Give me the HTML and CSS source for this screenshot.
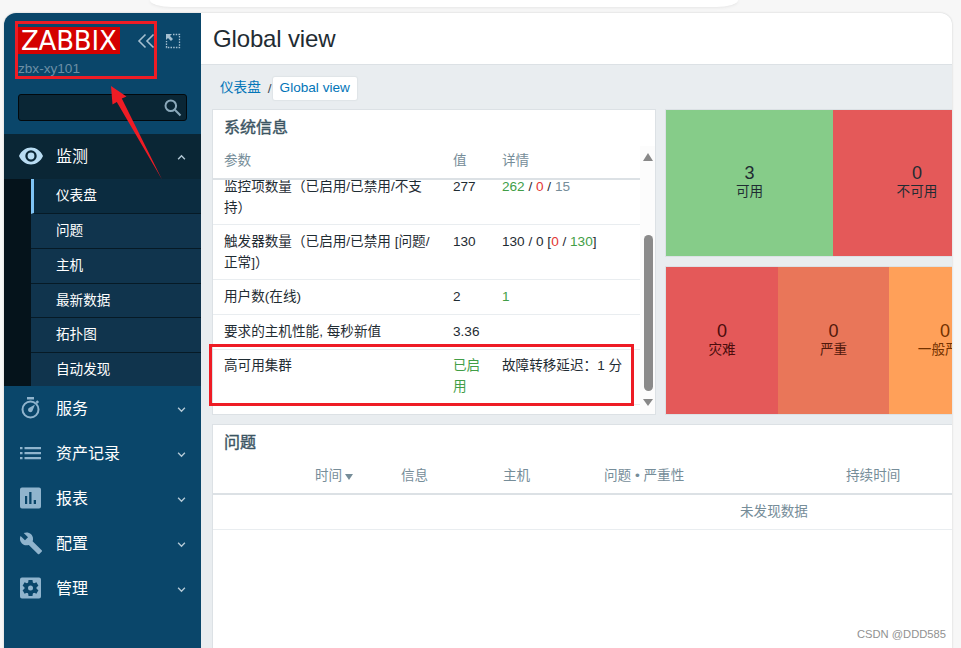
FILE: index.html
```html
<!DOCTYPE html>
<html lang="zh-CN">
<head>
<meta charset="utf-8">
<title>Global view</title>
<link rel="stylesheet" href="styles.css">
</head>
<body>
<div class="browser-bar"></div>
<div class="window">
  <aside class="sidebar">
    <div class="brand">
      <div class="logo">ZABBIX</div>
      <svg class="collapse" width="18" height="16" viewBox="0 0 18 16"><path d="M8.500 1.500 2 8l6.500 6.500M16.500 1.500 10 8l6.500 6.500"/></svg>
      <svg class="kiosk" width="16" height="16" viewBox="0 0 16 16"><path class="dots" d="M8 1.500h6.500v13h-13V8"/><path class="head" d="M1 1h6L5 3l3 3-2 2-3-3-2 2z"/></svg>
    </div>
    <div class="server">zbx-xy101</div>
    <div class="search"><svg width="18" height="18" viewBox="0 0 18 18"><circle cx="6.800" cy="6.800" r="5.300"/><path d="m10.800 10.800 5.700 5.700"/></svg></div>
    <nav>
      <a class="item open"><svg class="icon eye" viewBox="0 0 26 20"><path fill-rule="evenodd" d="M1 10C3.500 4.500 8 1.500 13 1.500S22.500 4.500 25 10c-2.500 5.500-7 8.500-12 8.500S3.500 15.500 1 10zm12-5.700a5.700 5.700 0 1 0 0 11.400 5.700 5.700 0 0 0 0-11.400z"/><circle cx="13" cy="10" r="3.400"/></svg><span>监测</span><svg class="chev" viewBox="0 0 8 6"><path d="m1 4.500 3-3 3 3"/></svg></a>
      <div class="submenu">
        <a class="selected">仪表盘</a><a>问题</a><a>主机</a><a>最新数据</a><a>拓扑图</a><a>自动发现</a>
      </div>
      <a class="item"><svg class="icon" viewBox="0 0 24 24"><path d="M9 1h7v2.500H9z"/><path d="m19.300 4.200 1.800 1.800-1.800 1.800-1.800-1.800z"/><circle class="line" cx="12.500" cy="13.500" r="8"/><path d="m17 8.500-2.500 6.200a2.300 2.300 0 1 1-3.600-2.600z"/></svg><span>服务</span><svg class="chev" viewBox="0 0 8 6"><path d="m1 1.500 3 3 3-3"/></svg></a>
      <a class="item"><svg class="icon" viewBox="0 0 24 24"><path d="M2 6h2.500v2.200H2zm4.500 0H23v2.200H6.500zM2 11h2.500v2.200H2zm4.500 0H23v2.200H6.500zM2 16h2.500v2.200H2zm4.500 0H23v2.200H6.500z"/></svg><span>资产记录</span><svg class="chev" viewBox="0 0 8 6"><path d="m1 1.500 3 3 3-3"/></svg></a>
      <a class="item"><svg class="icon" viewBox="0 0 24 24"><path fill-rule="evenodd" d="M4 1.500h17a2 2 0 0 1 2 2v17a2 2 0 0 1-2 2H4a2 2 0 0 1-2-2v-17a2 2 0 0 1 2-2zM7 10v8h2.200v-8zm4.200-4v12h2.300V6zm4.500 8v4h2.300v-4z"/></svg><span>报表</span><svg class="chev" viewBox="0 0 8 6"><path d="m1 1.500 3 3 3-3"/></svg></a>
      <a class="item"><svg class="icon" viewBox="-1 0 24 24"><path d="M22.700 19.300 13.600 10.200c.9-2.300.4-5-1.500-6.900-2-2-5-2.400-7.400-1.300L9 6.300 6 9.300 1.600 5C.4 7.400.9 10.400 2.900 12.400c1.900 1.900 4.600 2.400 6.900 1.500l9.100 9.100c.4.4 1 .4 1.400 0l2.300-2.300c.5-.4.5-1.100.1-1.400z"/></svg><span>配置</span><svg class="chev" viewBox="0 0 8 6"><path d="m1 1.500 3 3 3-3"/></svg></a>
      <a class="item"><svg class="icon" viewBox="0 0 24 24"><path d="M4 1.500h17a2 2 0 0 1 2 2v17a2 2 0 0 1-2 2H4a2 2 0 0 1-2-2v-17a2 2 0 0 1 2-2z"/><g class="gear"><circle cx="12.500" cy="12" r="6"/><path d="M10.500 4h4l.5 4h-5zM10 16h5l-.5 4h-4zM4.600 9.700l2-3.400L10.200 8l-2.500 4.300zM17.300 11.700l3.100 2.600-2 3.400-3.600-1.700zM6.600 17.700l-2-3.400 3.100-2.600 2.500 4.300zM14.800 8l3.600-1.700 2 3.400-3.100 2.600z"/></g><circle cx="12.500" cy="12" r="2.500"/></svg><span>管理</span><svg class="chev" viewBox="0 0 8 6"><path d="m1 1.500 3 3 3-3"/></svg></a>
    </nav>
  </aside>
  <main>
    <header><h1>Global view</h1></header>
    <div class="crumbs"><a>仪表盘</a><span class="slash">/</span><a class="current">Global view</a></div>
    <div class="dashboard">
      <section class="widget system">
        <h2>系统信息</h2>
        <div class="cols head"><span>参数</span><span>值</span><span>详情</span></div>
        <div class="rows">
          <div class="cols"><span>监控项数量（已启用/已禁用/不支持）</span><span>277</span><span><b class="green">262</b> / <b class="red">0</b> / <b class="grey">15</b></span></div>
          <div class="cols"><span>触发器数量（已启用/已禁用 [问题/正常]）</span><span>130</span><span>130 / 0 [<b class="red">0</b> / <b class="green">130</b>]</span></div>
          <div class="cols"><span>用户数(在线)</span><span>2</span><span class="green">1</span></div>
          <div class="cols"><span>要求的主机性能, 每秒新值</span><span>3.36</span><span></span></div>
          <div class="cols"><span>高可用集群</span><span class="green">已启用</span><span>故障转移延迟：1 分</span></div>
        </div>
        <div class="scrollbar"><i class="up"></i><i class="thumb"></i><i class="down"></i></div>
      </section>
      <div class="tiles">
        <section class="widget tile-row hosts">
          <div class="tile ok"><strong>3</strong>可用</div>
          <div class="tile bad"><strong>0</strong>不可用</div>
        </section>
        <section class="widget tile-row severity">
          <div class="tile disaster"><strong>0</strong>灾难</div>
          <div class="tile high"><strong>0</strong>严重</div>
          <div class="tile average"><strong>0</strong>一般严重</div>
        </section>
      </div>
      <section class="widget problems">
        <h2>问题</h2>
        <div class="pcols"><span></span><span>时间<i class="sort"></i></span><span>信息</span><span>主机</span><span>问题 • 严重性</span><span>持续时间</span></div>
        <div class="empty">未发现数据</div>
      </section>
    </div>
  </main>
</div>
<div class="mark mark-logo"></div>
<div class="mark mark-cluster"></div>
<svg class="arrow" width="56" height="98" viewBox="0 0 56 98"><path d="m3 2 15.500 10.500-4.700 2.100L54 95.500 8.800 18 4.500 20.500z"/></svg>
<div class="watermark">CSDN @DDD585</div>
</body>
</html>
```
FILE: styles.css
```css
* { box-sizing: border-box; }
body {
  margin: 0;
  height: 648px;
  overflow: hidden;
  position: relative;
  background: #f7f7f7;
  color: #1f2c33;
  font: 13.6px/20.5px "Liberation Sans", "Noto Sans CJK SC", sans-serif;
}
h1, h2 { margin: 0; }
b { font-weight: normal; }
.browser-bar {
  height: 7px;
  width: 588px;
  margin: 0 0 6px 150px;
  background: #fff;
  border-radius: 0 0 22px 22px / 0 0 7px 7px;
  box-shadow: 0 1px 3px #e6e6e6;
}
.window {
  display: flex;
  width: 948px;
  height: 660px;
  margin-left: 4px;
  border-radius: 12px;
  overflow: hidden;
  background: #e9edf0;
  box-shadow: 0 0 2px #c4c4c4;
}

/* Sidebar */
.sidebar { flex: 0 0 197px; background: #0a466a; color: #fff; }
.brand { display: flex; height: 41px; padding: 14px 0 0 13px; }
.logo {
  width: 103px;
  height: 27px;
  padding-left: 4px;
  background: #d40000;
  font: 26px/28px "DejaVu Sans", sans-serif;
  letter-spacing: -.2px;
}
.brand svg { fill: none; stroke: #a5bfd0; }
.collapse { margin: 6px 0 0 17px; stroke-width: 1.6; }
.kiosk { margin: 6px 0 0 10px; }
.kiosk .dots { stroke-dasharray: 1.500 1.200; stroke-width: 1.300; }
.kiosk .head { fill: #a5bfd0; stroke: none; }
.server { height: 30px; padding: 5px 0 0 14px; color: #6c8fa5; }
.search {
  display: flex;
  justify-content: flex-end;
  margin: 10px 14px 13px;
  padding: 4px 4px 0 0;
  height: 27px;
  background: #0a2635;
  border: 1px solid #02090d;
  border-radius: 3px;
}
.search svg { fill: none; stroke: #8aa8ba; stroke-width: 2; }
.item {
  display: flex;
  align-items: center;
  height: 45px;
  padding: 0 15px 0 14px;
  font-size: 16px;
}
.item span { flex: 1; margin-left: 14px; padding-top: 2px; }
.item.open { background: #0a2635; }
.icon { width: 24px; height: 24px; fill: #90b4cd; margin-bottom: 2px; }
.icon .line { fill: none; stroke: #90b4cd; stroke-width: 2; }
.icon .gear { fill: #0a466a; }
.icon.eye { width: 26px; height: 20px; fill: #b9dcf2; margin-right: -2px; }
.chev { width: 9px; height: 7px; fill: none; stroke: #b4c9d6; stroke-width: 1.200; margin-top: 2px; }
.submenu {
  height: 207px;
  padding-left: 27px;
  display: grid;
  grid-template-rows: 35px 35px 35px 34px 35px 33px;
  background: #05131b;
}
.submenu a {
  padding: 7px 0 0 25px;
  background: #10344d;
  border-bottom: 1px solid #061a26;
}
.submenu a:last-child { border: 0; }
.submenu .selected { padding-left: 22px; border-left: 3px solid #7fc4f5; background: #0b2c40; }

/* Page content */
main { flex: 1; min-width: 0; }
header { height: 52px; padding: 10px 0 0 12px; background: #fff; border-bottom: 1px solid #dce1e5; }
h1 { font-size: 24px; line-height: 31px; font-weight: normal; letter-spacing: -.15px; }
.crumbs { display: flex; align-items: center; height: 44px; padding: 3px 0 0 19px; color: #0275b8; }
.slash { margin: 2px 1px 0 7px; color: #3c4b53; }
.crumbs .current {
  height: 23px;
  padding: 0 7px;
  line-height: 22px;
  background: #fff;
  border-radius: 2px;
  box-shadow: 0 0 1px 1px #dfe4e7;
}
.dashboard {
  display: grid;
  grid-template: 306px 240px / 444px 337px;
  gap: 9px;
  margin-left: 11px;
  width: 790px;
}
.widget { background: #fff; border: 1px solid #dce1e5; }
h2 {
  padding: 1px 0 0 11px;
  font-size: 16px;
  line-height: 33px;
  font-weight: normal;
  color: #3c5563;
  -webkit-text-stroke: .4px #3c5563;
}
.system { display: grid; grid-template: 34px 36px 225px 1fr / 427px 15px; }
.system h2 { grid-column: 1 / -1; }
.cols { display: grid; grid-template-columns: 229px 49px 1fr; padding: 7px 4px 0 11px; border-bottom: 1px solid #e9edf0; }
.cols span:first-child { padding-right: 20px; }
.cols span:nth-child(2) { padding-right: 16px; }
.cols.head { border-bottom: 2px solid #dce1e5; color: #768d99; }
.rows { overflow: hidden; display: grid; grid-template-rows: 55px 55px 35px 35px 55px; align-content: end; }
.rows .cols:last-child { padding-top: 6px; }
.scrollbar {
  grid-area: 2 / 2 / 5 / 3;
  display: flex;
  flex-direction: column;
  align-items: center;
  margin-top: 2px;
  padding: 7px 0 0 1px;
  background: #fcfcfc;
}
.up, .down { border: 5px solid transparent; width: 0; }
.up { border-bottom: 8px solid #888; border-top: 0; }
.thumb { width: 9px; height: 156px; margin: 74px 0 8px; border-radius: 5px; background: #8b8b8b; }
.down { border-top: 7px solid #888; border-bottom: 0; }
.green { color: #429e47; }
.red { color: #e33734; }
.grey { color: #768d99; }

/* Status tiles */
.tiles { display: grid; grid-template-rows: 148px 149px; gap: 9px; }
.tile-row { display: grid; }
.hosts { grid-template-columns: 167px 168px; }
.severity { grid-template-columns: 112px 111px 112px; }
.tile { display: flex; flex-direction: column; align-items: center; justify-content: center; line-height: 18px; color: #1f2c33; }
.tile strong { font-size: 18px; line-height: 19px; font-weight: normal; }
.hosts .tile { padding-bottom: 1px; }
.ok { background: #86cc89; }
.bad, .disaster { background: #e45959; }
.high { background: #e97659; }
.average { background: #ffa059; }
.tile.disaster { color: #4b0c0c; }
.tile.high { color: #52190b; }
.tile.average { color: #733100; }

/* Problems */
.problems { grid-column: 1 / -1; }
.pcols {
  display: grid;
  grid-template-columns: 102px 86px 102px 101px 242px 1fr;
  height: 36px;
  padding-top: 7px;
  border-bottom: 2px solid #dce1e5;
  color: #768d99;
}
.sort { display: inline-block; margin: 0 0 0 3px; border: 4px solid transparent; border-top: 6px solid #768d99; border-bottom: 0; }
.empty { height: 35px; padding: 7px 0 0 527px; border-bottom: 1px solid #e9edf0; color: #768d99; }

/* Annotations over the page */
.mark { position: absolute; border: 3px solid #ee1c25; }
.mark-logo { left: 15px; top: 21px; width: 142px; height: 58px; }
.mark-cluster { left: 209px; top: 344px; width: 425px; height: 62px; }
.arrow { position: absolute; left: 108px; top: 84px; fill: #ee1c25; }
.watermark { position: absolute; right: 15px; top: 624px; font-size: 11.200px; color: #919191; }
```
